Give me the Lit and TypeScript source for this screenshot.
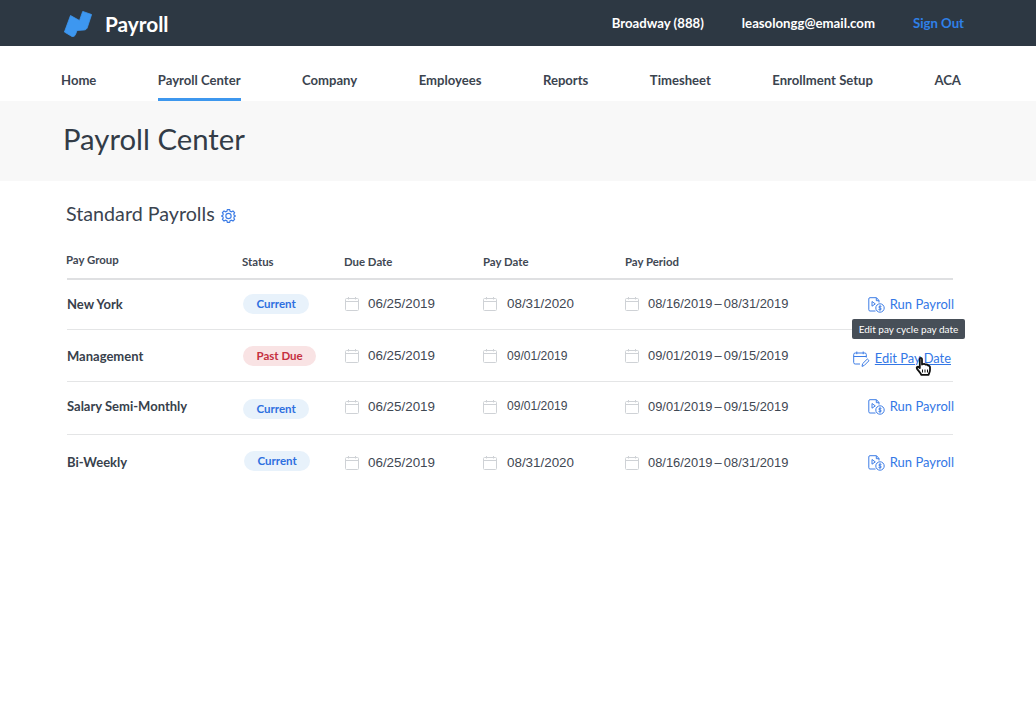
import { LitElement, html, css, svg } from "lit";
import { customElement } from "lit/decorators.js";

const calendar = html`<svg class="cal" viewBox="0 0 14 14" width="14" height="14" fill="none" stroke="#cfd2d6" stroke-width="1"><rect x="0.5" y="1.5" width="13" height="12" rx="1"/><path d="M0.5 4.5H13.5M3.5 0V2.5M10.5 0V2.5"/></svg>`;

const runIcon = html`<svg class="act" viewBox="0 0 17 16" width="17" height="16" fill="none" stroke="#3d7de6" stroke-width="1"><path d="M11 5.5V3.5L8.5 0.7H2A1.2 1.2 0 0 0 0.8 2V12.8A1.2 1.2 0 0 0 2 14H7.5"/><path d="M8.3 0.9V3.7H11"/><path d="M4 4.5V9.2L7.3 6.9Z"/><circle cx="12" cy="11" r="4.2"/><path d="M13.4 9.5C13 9 11 8.8 10.8 10C10.7 11.3 13.4 10.7 13.3 12C13.1 13.2 11 13 10.5 12.4M12 8.4V13.6"/></svg>`;

const editIcon = html`<svg class="act" viewBox="0 0 17 16" width="17" height="16" fill="none" stroke="#3d7de6" stroke-width="1"><path d="M7 13H2.2A1.5 1.5 0 0 1 0.7 11.5V3.5A1.5 1.5 0 0 1 2.2 2H11.8A1.5 1.5 0 0 1 13.3 3.5V6.5"/><path d="M0.7 5.5H13.3M3.8 0.5V3.2M10.2 0.5V3.2"/><path d="M9 15.4L9.6 12.7L14.3 8L16 9.7L11.3 14.4Z"/></svg>`;

const gear = svg`<path d="M6.2 0.8H8.8L9.3 2.6L10.9 3.3L12.6 2.4L14.4 4.2L13.4 5.9L14.1 7.5L15.6 8L14.1 8.5L13.5 10.1L14.4 11.8L12.6 13.6L10.9 12.7L9.3 13.4L8.8 15.2H6.2L5.7 13.4L4.1 12.7L2.4 13.6L0.6 11.8L1.6 10.1L0.9 8.5L-0.6 8L0.9 7.5L1.6 5.9L0.6 4.2L2.4 2.4L4.1 3.3L5.7 2.6Z"/><circle cx="7.5" cy="8" r="3"/>`;

interface Row {
  name: string;
  status: string;
  due: string;
  pay: string;
  period: string;
  cls: string;
}

const rows: Row[] = [
  { name: "New York", status: "Current", due: "06/25/2019", pay: "08/31/2020", period: "08/16/2019 – 08/31/2019", cls: "r1" },
  { name: "Management", status: "Past Due", due: "06/25/2019", pay: "09/01/2019", period: "09/01/2019 – 09/15/2019", cls: "r2" },
  { name: "Salary Semi-Monthly", status: "Current", due: "06/25/2019", pay: "09/01/2019", period: "09/01/2019 – 09/15/2019", cls: "r3" },
  { name: "Bi-Weekly", status: "Current", due: "06/25/2019", pay: "08/31/2020", period: "08/16/2019 – 08/31/2019", cls: "r4" },
];

const nav = ["Home", "Payroll Center", "Company", "Employees", "Reports", "Timesheet", "Enrollment Setup", "ACA"];

@customElement("app-root")
export class AppRoot extends LitElement {
  static styles = css`
    :host {
      display: block;
      width: 1036px;
      height: 720px;
      background: #fff;
      color: #333c47;
      font-family: "Lato", "Open Sans", sans-serif;
      overflow: hidden;
    }
    .top {
      height: 46px;
      background: #2d3843;
      display: flex;
      align-items: center;
      padding: 0 72px 0 64px;
      color: #fff;
    }
    .logo { margin-right: 13px; margin-top: 1px; }
    .brand { font-size: 20.8px; font-weight: 700; flex: 1; }
    .top span.info { font-size: 13.2px; font-weight: 700; margin-right: 38px; }
    .top span.out { font-size: 13.2px; font-weight: 700; color: #2f80e8; }
    .nav {
      height: 55px;
      display: flex;
      justify-content: space-between;
      padding: 0 75px 0 61px;
    }
    .nav a {
      font-size: 13.1px;
      font-weight: 700;
      color: #3b444f;
      line-height: 69px;
      height: 55px;
      box-sizing: border-box;
    }
    .nav a.on { border-bottom: 3px solid #3d97ee; }
    .band {
      height: 80px;
      background: #f8f8f8;
      display: flex;
      align-items: center;
      padding: 0 0 5px 63px;
      box-sizing: border-box;
      font-size: 29.3px;
      color: #333c47;
    }
    .content { padding: 0 83px 0 67px; }
    .h2 {
      height: 69px;
      padding-bottom: 4px;
      box-sizing: border-box;
      display: flex;
      align-items: center;
      gap: 6px;
      font-size: 19.7px;
      color: #3b444f;
      margin-left: -1px;
    }
    .h2 svg { margin-top: 4px; }
    .grid {
      display: grid;
      grid-template-columns: 175px 102px 139px 142px 1fr auto;
      align-items: center;
    }
    .head {
      height: 28px;
      padding-bottom: 3px;
      margin-top: -3px;
      border-bottom: 2px solid #dfe0e2;
      font-size: 11.4px;
      font-weight: 700;
      color: #3f4853;
    }
    .head div:first-child { margin-top: -3px; margin-left: -1px; }
    .row { border-bottom: 1px solid #e4e5e6; }
    .r1 { height: 47px; padding-bottom: 2px; }
    .r2 { height: 51px; }
    .r3 { height: 53px; padding-bottom: 4px; box-sizing: border-box; }
    .r4 { height: 54px; border-bottom: none; }
    .name { font-size: 13px; font-weight: 700; color: #38414c; }
    .badge {
      display: inline-block;
      height: 20px;
      line-height: 20px;
      padding: 0 13.5px;
      border-radius: 10px;
      font-size: 11.5px;
      font-weight: 700;
      background: #e8f2fb;
      color: #2e6fe0;
      margin-left: 1px;
      position: relative;
    }
    .badge.late { background: #f9e3e4; color: #c5303f; }
    .r1 .badge, .r2 .badge { top: -1px; }
    .r3 .badge { top: 2px; }
    .r4 .badge { margin-left: 2px; top: -2px; }
    .date {
      display: flex;
      align-items: center;
      font-family: "Liberation Sans", sans-serif;
      font-size: 13.4px;
      color: #3f4853;
    }
    .date.small { font-size: 12.1px; }
    .date.period { font-size: 12.9px; word-spacing: -1.5px; }
    .cal { margin: 1px 9px 0 0; flex: none; }
    .date.due { padding-left: 1px; }
    .date.pay .cal { margin-right: 10px; }
    .action {
      display: flex;
      justify-content: flex-end;
      align-items: center;
      gap: 5px;
      font-size: 13px;
      color: #3377e6;
      position: relative;
      margin-right: -1px;
    }
    .act { margin-top: 2px; }
    .r3 .action { margin-top: -1px; }
    .edit { margin-right: 2px; margin-top: 4px; font-size: 12.9px; }
    .edit span { text-decoration: underline; }
    .tip {
      position: absolute;
      right: -14px;
      top: -30px;
      height: 20px;
      line-height: 20px;
      width: 113px;
      background: #474f58;
      color: #fff;
      font-size: 10px;
      text-align: center;
      border-radius: 2px;
    }
    .hand { position: absolute; right: 20px; top: 8px; }
  `;

  private statusBadge(s: string) {
    return html`<span class="badge ${s === "Past Due" ? "late" : ""}">${s}</span>`;
  }

  render() {
    return html`
      <div class="top">
        <svg class="logo" width="28" height="26" viewBox="0 0 28 26"><path fill="#3d97f0" stroke="#3d97f0" stroke-width="0.8" stroke-linejoin="round" d="M0.4 21L6.5 4.5L15.5 9.5L18.7 0.4L27.6 3.5L23.5 16C23 18 21.5 19 20 19L13 19.5L11.5 23.5C11 25 9.5 25.8 8 25.5Z"/></svg>
        <span class="brand">Payroll</span>
        <span class="info">Broadway (888)</span>
        <span class="info">leasolongg@email.com</span>
        <span class="out">Sign Out</span>
      </div>
      <div class="nav">
        ${nav.map((n) => html`<a class="${n === "Payroll Center" ? "on" : ""}">${n}</a>`)}
      </div>
      <div class="band">Payroll Center</div>
      <div class="content">
        <div class="h2">Standard Payrolls
          <svg width="15" height="16" viewBox="-1 0 17 16" fill="none" stroke="#3d7de6" stroke-width="1.3">${gear}</svg>
        </div>
        <div class="grid head">
          <div>Pay Group</div><div>Status</div><div>Due Date</div><div>Pay Date</div><div>Pay Period</div><div></div>
        </div>
        ${rows.map(
          (r) => html`
            <div class="grid row ${r.cls}">
              <div class="name">${r.name}</div>
              <div>${this.statusBadge(r.status)}</div>
              <div class="date due">${calendar}${r.due}</div>
              <div class="date pay ${r.pay.startsWith("09/01") ? "small" : ""}">${calendar}${r.pay}</div>
              <div class="date period">${calendar}${r.period}</div>
              ${r.cls === "r2"
                ? html`<div class="action edit">${editIcon}<span>Edit Pay Date</span>
                    <div class="tip">Edit pay cycle pay date</div>
                    <svg class="hand" width="16" height="19" viewBox="0 0 16 19"><path fill="#fff" stroke="#111" stroke-width="1.8" stroke-linejoin="round" d="M5 1.2C5.8 0.6 7 1 7 2.2V7.5C8 7 10 7 10.6 7.6C11.6 7.4 13 7.8 13.3 8.6C14.6 8.5 15 9.6 15 10.6V13C15 15 14 16 13.6 17.8H6.2C5.6 16 3.8 14.2 2.6 12.6C1.6 11.4 1.4 10 2.4 9.8C3.4 9.6 4.2 10.4 4.8 11V2.2Z"/><path stroke="#111" d="M7.5 12.5V15.5M10 12.5V15.5M12.5 12.5V15.5"/></svg>
                  </div>`
                : html`<div class="action">${runIcon}<span>Run Payroll</span></div>`}
            </div>
          `
        )}
      </div>
    `;
  }
}
